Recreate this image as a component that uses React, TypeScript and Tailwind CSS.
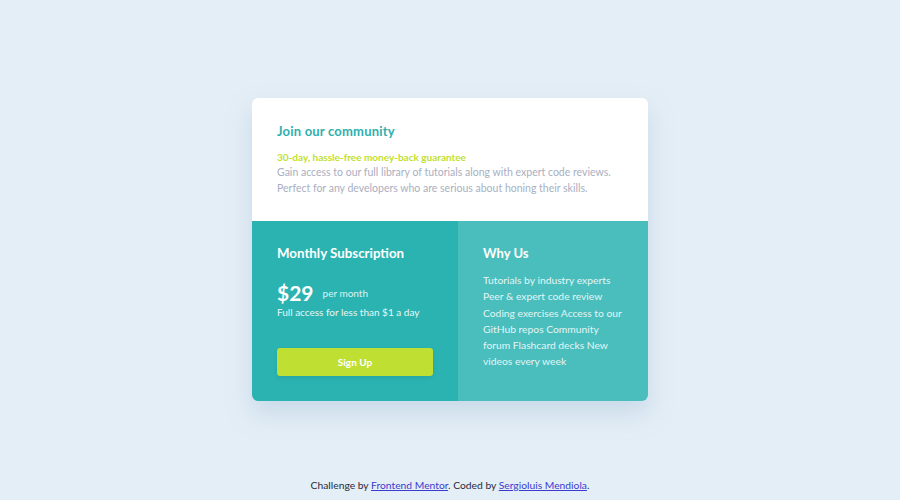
export default function App() {
  const features = "Tutorials by industry experts Peer & expert code review Coding exercises Access to our GitHub repos Community forum Flashcard decks New videos every week";

  return (
    <div className="min-h-[500px] w-full bg-[#e4eef6] font-['Lato',sans-serif] flex flex-col items-center">
      <div className="mt-[98px] w-[396px] rounded-md overflow-hidden bg-white shadow-[0_12px_24px_rgba(150,180,210,0.35)]">
        <div className="px-[25px] pt-[24px] pb-[25px]">
          <h1 className="text-[13px] font-bold text-[#2fb0ae] tracking-[0.2px]">Join our community</h1>
          <p className="mt-[9px] text-[10px] font-bold text-[#bfdf32] leading-[13px]">
            30-day, hassle-free money-back guarantee
          </p>
          <p className="text-[10.5px] leading-[16px] text-[#a9afc1]">
            Gain access to our full library of tutorials along with expert code reviews. Perfect for any developers who are serious about honing their skills.
          </p>
        </div>
        <div className="flex h-[180px]">
          <div className="w-[206px] bg-[#2bb3b1] px-[25px] pt-[23px]">
            <h2 className="text-[13.3px] font-bold text-white">Monthly Subscription</h2>
            <div className="mt-[18px] flex items-center gap-[9px]">
              <span className="text-[21px] font-bold text-white leading-[24px]">$29</span>
              <span className="text-[10px] text-[#d9f3f2]">per month</span>
            </div>
            <p className="text-[10px] text-[#e6f7f6]">Full access for less than $1 a day</p>
            <button className="mt-[28px] w-[156px] h-[28px] rounded-[3px] bg-[#bfdf32] text-white text-[10px] font-bold shadow-[0_2px_4px_rgba(0,0,0,0.08)]">
              Sign Up
            </button>
          </div>
          <div className="flex-1 bg-[#4abebd] pl-[25px] pr-[24px] pt-[23px]">
            <h2 className="text-[13px] font-bold text-white">Why Us</h2>
            <p className="mt-[9px] text-[10.3px] leading-[16.3px] text-[#e3f5f5]">{features}</p>
          </div>
        </div>
      </div>
      <footer className="mt-auto pb-[7px] text-[10.3px] text-[#2a2a3a]">
        Challenge by <a href="#" className="text-[#3b3bd0] underline">Frontend Mentor</a>. Coded by{" "}
        <a href="#" className="text-[#3b3bd0] underline">Sergioluis Mendiola</a>.
      </footer>
    </div>
  );
}
